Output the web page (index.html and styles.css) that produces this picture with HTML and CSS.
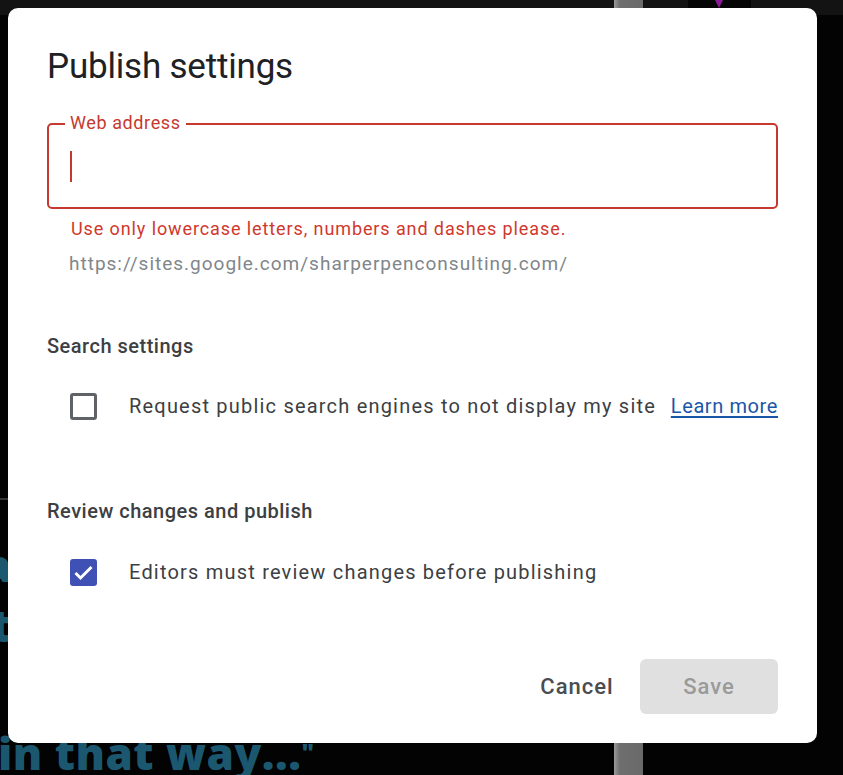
FILE: index.html
```html
<!DOCTYPE html>
<html>
<head>
<meta charset="utf-8">
<link rel="stylesheet" href="styles.css">
</head>
<body>
<div class="backdrop">
  <div class="topstrip"></div>
  <div class="vbar"></div>
  <div class="topblack"><div class="purple"></div></div>
  <div class="leftline"></div>
  <div class="bgtext bg1">ca</div>
  <div class="bgtext bg2">et</div>
  <div class="bgtext bg3">in that way...<span class="q">"</span></div>
</div>

<div class="dialog">
  <h1 class="title">Publish settings</h1>

  <div class="field">
    <span class="field-label">Web address</span>
    <span class="caret"></span>
  </div>
  <div class="error">Use only lowercase letters, numbers and dashes please.</div>
  <div class="url">https://sites.google.com/sharperpenconsulting.com/</div>

  <h2 class="section section-search">Search settings</h2>
  <div class="row row-search">
    <span class="box"></span>
    <span class="row-text">Request public search engines to not display my site</span>
    <a class="learn" href="#">Learn more</a>
  </div>

  <h2 class="section section-review">Review changes and publish</h2>
  <div class="row row-review">
    <span class="box checked">
      <svg class="check" viewBox="0 0 27 27" width="27" height="27"><path d="M5.5 14l5 5L21.5 8" fill="none" stroke="#fff" stroke-width="3"/></svg>
    </span>
    <span class="row-text">Editors must review changes before publishing</span>
  </div>

  <div class="actions">
    <button class="btn cancel">Cancel</button>
    <button class="btn save">Save</button>
  </div>
</div>
</body>
</html>
```
FILE: styles.css
```css
html, body {
  margin: 0;
  padding: 0;
  width: 843px;
  height: 775px;
  overflow: hidden;
  background: #030303;
  font-family: Roboto, "Liberation Sans", sans-serif;
}

.backdrop {
  position: absolute;
  inset: 0;
  overflow: hidden;
}
.topstrip {
  position: absolute;
  left: 0; top: 0;
  width: 843px; height: 15px;
  background: #131313;
}
.vbar {
  position: absolute;
  left: 614px; top: 0;
  width: 29px; height: 775px;
  background: linear-gradient(to right, #9a9a9a, #6e6e6e 20%, #6a6a6a);
}
.topblack {
  position: absolute;
  left: 688px; top: 0;
  width: 63px; height: 15px;
  background: #050505;
}
.purple {
  position: absolute;
  left: 27px; top: 0;
  width: 0; height: 0;
  border-left: 4px solid transparent;
  border-right: 4px solid transparent;
  border-top: 8px solid #8b1a9a;
}
.leftline {
  position: absolute;
  left: 0; top: 498px;
  width: 10px; height: 2px;
  background: #333;
}
.bgtext {
  position: absolute;
  color: #1b5870;
  font-family: "Open Sans", sans-serif;
  font-weight: 800;
  font-size: 44px;
  line-height: 50px;
  white-space: nowrap;
}
.bg1 { left: -40px; top: 540px; }
.bg2 { left: -36px; top: 600px; }
.bg3 { left: -2px; top: 728px; letter-spacing: 0.5px; }
.bg3 .q { font-size: 24px; vertical-align: top; }

.dialog {
  position: absolute;
  left: 8px; top: 8px;
  width: 809px; height: 735px;
  box-sizing: border-box;
  background: #fff;
  border-radius: 10px;
  padding: 0 39px;
  display: flex;
  flex-direction: column;
}

.title {
  margin: 37px 0 0;
  font-weight: 400;
  font-size: 35px;
  line-height: 44px;
  color: #202124;
  letter-spacing: -0.2px;
}

.field {
  position: relative;
  margin-top: 34px;
  height: 86px;
  box-sizing: border-box;
  border: 2px solid #c5392f;
  border-radius: 5px;
}
.field-label {
  position: absolute;
  left: 16px; top: -13px;
  padding: 0 5px 0 5px;
  background: #fff;
  color: #c5392f;
  font-size: 18px;
  line-height: 22px;
  letter-spacing: 0.6px;
}
.caret {
  position: absolute;
  left: 21px; top: 26px;
  width: 2px; height: 31px;
  background: #c5392f;
}

.error {
  margin: 8px 0 0 24px;
  color: #d0382d;
  font-size: 18px;
  line-height: 24px;
  letter-spacing: 0.9px;
}
.url {
  margin: 11px 0 0 22px;
  color: #80868b;
  font-size: 19px;
  line-height: 24px;
  letter-spacing: 1px;
}

.section {
  margin: 0;
  font-weight: 500;
  font-size: 20px;
  line-height: 26px;
  color: #3c4043;
  letter-spacing: 0.5px;
}
.section-search { margin-top: 57px; }
.section-review { margin-top: 77px; }

.row {
  display: flex;
  align-items: center;
  height: 30px;
  padding-left: 23px;
}
.row-search { margin-top: 32px; }
.row-review { margin-top: 33px; }

.box {
  position: relative;
  width: 27px; height: 27px;
  box-sizing: border-box;
  border: 3px solid #5f6368;
  border-radius: 3px;
  flex: none;
}
.box.checked {
  background: #3f51b5;
  border: none;
}
.check {
  display: block;
}

.row-text {
  margin-left: 32px;
  font-size: 20px;
  color: #3c4043;
  letter-spacing: 1.2px;
}
.learn {
  margin-left: auto;
  font-size: 20px;
  color: #1a56a8;
  text-decoration: underline;
  text-underline-offset: 3px;
  letter-spacing: 0.6px;
}

.actions {
  margin-top: auto;
  margin-bottom: 29px;
  display: flex;
  justify-content: flex-end;
  align-items: center;
  gap: 14px;
}
.btn {
  border: none;
  font-family: Roboto, "Liberation Sans", sans-serif;
  font-size: 22px;
  font-weight: 500;
  height: 55px;
  border-radius: 6px;
  padding: 0;
  letter-spacing: 1px;
}
.cancel {
  background: transparent;
  color: #4a4d50;
  width: 98px;
}
.save {
  background: #e0e0e0;
  color: #9a9a9a;
  width: 138px;
}
```
